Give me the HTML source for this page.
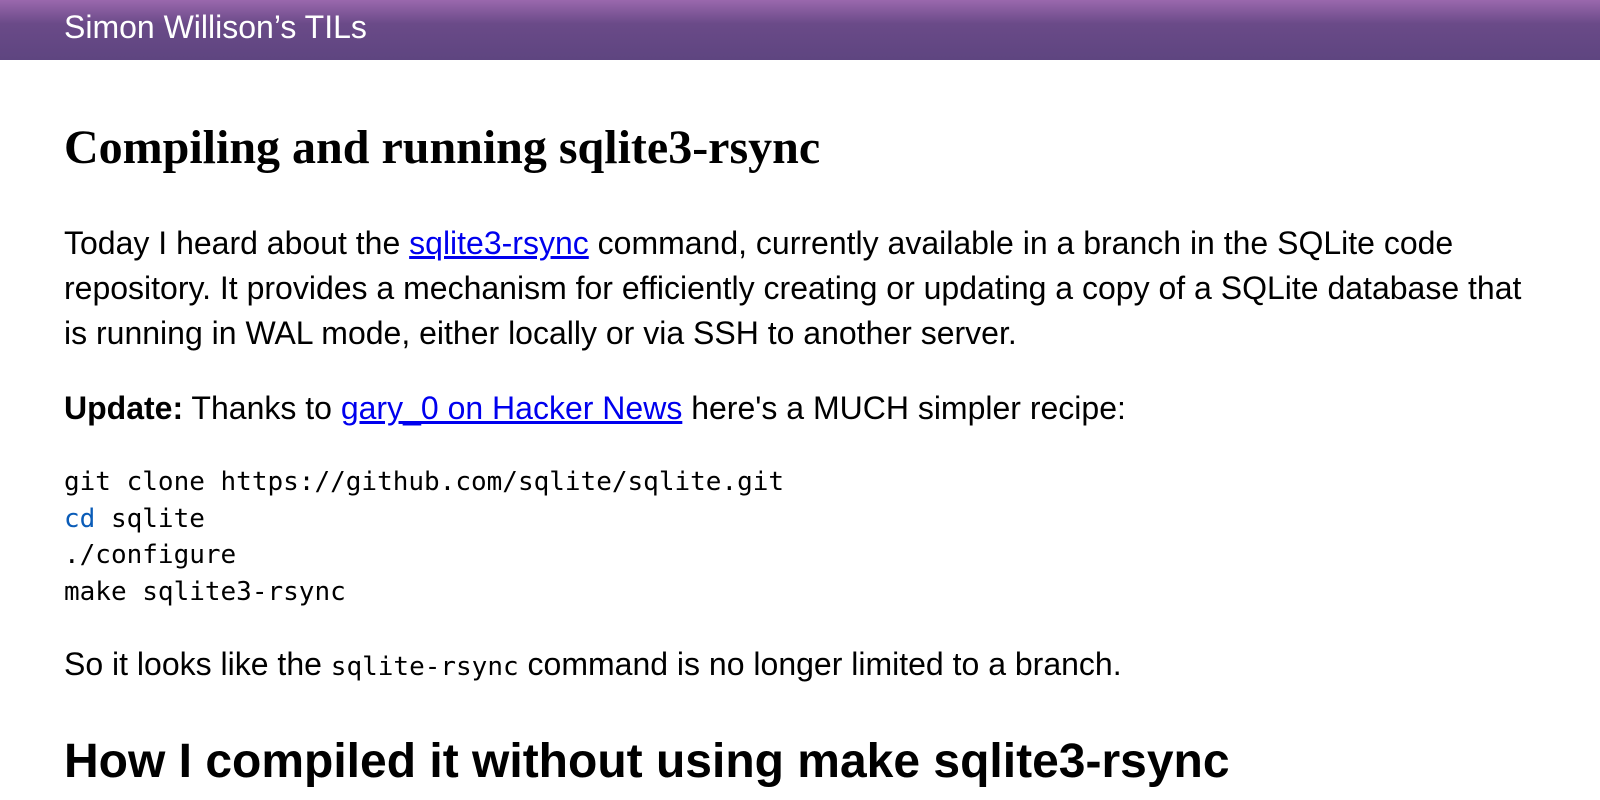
<!DOCTYPE html>
<html><head><meta charset="utf-8"><style>
body{margin:0;font-family:"Liberation Sans",sans-serif;color:#000;background:#fff}
header{height:60px;background:linear-gradient(#9a68ad 0%,#6a4a88 40%,#5e4580 100%);}
header a{display:block;padding-left:64px;color:#fff;font-size:32px;line-height:55px;text-decoration:none}
main{padding:0 64px;}
h1{font-family:"Liberation Serif",serif;font-size:48px;font-weight:bold;margin:63px 0 0;line-height:50px}
p{font-size:32px;line-height:45px;margin:0}
a{color:#0000ee}
pre{font-family:"DejaVu Sans Mono",monospace;font-size:26px;line-height:36.5px;margin:0}
code{font-family:"DejaVu Sans Mono",monospace;font-size:26px}
h2{font-size:48px;font-weight:bold;margin:0;line-height:56px}
</style></head><body>
<header><a>Simon Willison’s TILs</a></header>
<main>
<h1>Compiling and running sqlite3-rsync</h1>
<p style="margin-top:48px">Today I heard about the <a href="#">sqlite3-rsync</a> command, currently available in a branch in the SQLite code repository. It provides a mechanism for efficiently creating or updating a copy of a SQLite database that is running in WAL mode, either locally or via SSH to another server.</p>
<p style="margin-top:30px"><b>Update:</b> Thanks to <a href="#">gary_0 on Hacker News</a> here's a MUCH simpler recipe:</p>
<pre style="margin-top:33px">git clone https://github.com/sqlite/sqlite.git
<span style="color:#0a5cb8">cd</span> sqlite
./configure
make sqlite3-rsync</pre>
<p style="margin-top:32px">So it looks like the <code>sqlite-rsync</code> command is no longer limited to a branch.</p>
<h2 style="margin-top:44px">How I compiled it without using make sqlite3-rsync</h2>
</main>
</body></html>
